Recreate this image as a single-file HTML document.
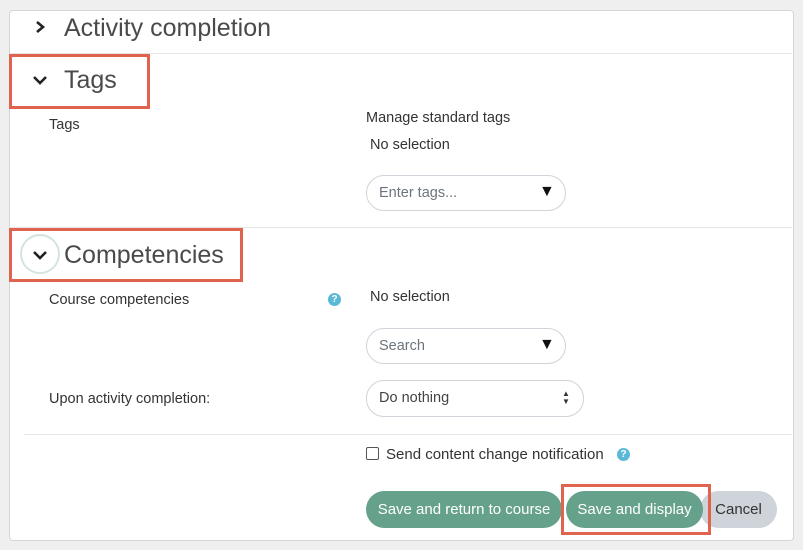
<!DOCTYPE html>
<html><head><style>
body{margin:0;width:803px;height:550px;background:#efefef;font-family:"Liberation Sans",sans-serif;color:#373a3c;position:relative;overflow:hidden}
.card{position:absolute;left:9px;top:10px;width:783px;height:529px;background:#fff;border:1px solid #d5d5d5;border-radius:4px}
.a{position:absolute;white-space:nowrap}
.h{font-size:25px;color:#4a4a4a}
.l{font-size:14.5px;color:#333}
.hr{position:absolute;height:1px;background:#e6e6e6}
.red{position:absolute;border:3px solid #e0634e;box-sizing:border-box}
.inp{position:absolute;border:1px solid #ced4da;border-radius:18px;box-sizing:border-box;font-size:14.5px;color:#6c757d;padding-left:12px}
.btn{position:absolute;border-radius:19px;font-size:14.5px;text-align:center;box-sizing:border-box}
.g{background:#66a18c;color:#fff}
.q{position:absolute;width:13px;height:13px;border-radius:50%;background:#5bb8d6;color:#fff;font-size:10px;font-weight:bold;text-align:center;line-height:13px}
</style></head><body>
<div class="card"></div>
<svg class="a" style="left:34px;top:20px" width="12" height="14"><path d="M3 2 L9 7 L3 12" stroke="#222" stroke-width="2.6" fill="none"/></svg>
<div class="a h" style="left:64px;top:14px">Activity completion</div>
<div class="hr" style="left:10px;top:53px;width:782px"></div>
<div class="red" style="left:9px;top:54px;width:141px;height:55px"></div>
<svg class="a" style="left:32px;top:74px" width="16" height="12"><path d="M2 3 L8 9 L14 3" stroke="#222" stroke-width="2.6" fill="none"/></svg>
<div class="a h" style="left:64px;top:66px">Tags</div>
<div class="a l" style="left:49px;top:117px">Tags</div>
<div class="a l" style="left:366px;top:110px">Manage standard tags</div>
<div class="a l" style="left:370px;top:137px">No selection</div>
<div class="inp" style="left:366px;top:175px;width:200px;height:36px;line-height:34px">Enter tags...</div>
<div class="a" style="left:539px;top:183px;font-size:16px;color:#111">▼</div>
<div class="hr" style="left:10px;top:227px;width:782px"></div>
<div class="red" style="left:9px;top:228px;width:234px;height:54px"></div>
<div class="a" style="left:20px;top:234px;width:40px;height:40px;border-radius:50%;border:2px solid #d4e4dd;box-sizing:border-box"></div>
<svg class="a" style="left:32px;top:249px" width="16" height="12"><path d="M2 3 L8 9 L14 3" stroke="#222" stroke-width="2.6" fill="none"/></svg>
<div class="a h" style="left:64px;top:241px">Competencies</div>
<div class="a l" style="left:49px;top:292px">Course competencies</div>
<div class="q" style="left:328px;top:293px">?</div>
<div class="a l" style="left:370px;top:289px">No selection</div>
<div class="inp" style="left:366px;top:328px;width:200px;height:36px;line-height:34px">Search</div>
<div class="a" style="left:539px;top:336px;font-size:16px;color:#111">▼</div>
<div class="a l" style="left:49px;top:391px">Upon activity completion:</div>
<div class="inp" style="left:366px;top:380px;width:218px;height:37px;line-height:35px;color:#444">Do nothing</div>
<div class="a" style="left:562px;top:390px;font-size:8px;line-height:8px;color:#333">▲<br>▼</div>
<div class="hr" style="left:24px;top:434px;width:768px"></div>
<div class="a" style="left:366px;top:447px;width:13px;height:13px;border:1px solid #555;border-radius:2px;box-sizing:border-box"></div>
<div class="a l" style="left:386px;top:446px;font-size:15px">Send content change notification</div>
<div class="q" style="left:617px;top:448px">?</div>
<div class="btn g" style="left:366px;top:491px;width:196px;height:37px;line-height:37px;font-size:15px">Save and return to course</div>
<div class="btn" style="left:700px;top:491px;width:77px;height:37px;line-height:37px;background:#ced4da;color:#333;font-size:15px">Cancel</div>
<div class="btn g" style="left:566px;top:491px;width:137px;height:37px;line-height:37px;font-size:15px">Save and display</div>
<div class="red" style="left:561px;top:484px;width:150px;height:51px"></div>
</body></html>
